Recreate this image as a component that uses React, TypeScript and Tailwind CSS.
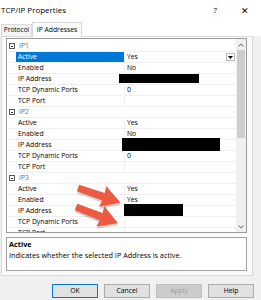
import React from "react";

type Row = [string, string];
const groups: { name: string; rows: Row[] }[] = [
  { name: "IP1", rows: [["Active", "Yes"], ["Enabled", "No"], ["IP Address", ""], ["TCP Dynamic Ports", "0"], ["TCP Port", ""]] },
  { name: "IP2", rows: [["Active", "Yes"], ["Enabled", "No"], ["IP Address", ""], ["TCP Dynamic Ports", "0"], ["TCP Port", ""]] },
  { name: "IP3", rows: [["Active", "Yes"], ["Enabled", "Yes"], ["IP Address", ""], ["TCP Dynamic Ports", ""], ["TCP Port", ""]] },
];

function Minus() {
  return (
    <div className="relative w-[6px] h-[6px] border border-[#5a5a5a] bg-white">
      <div className="absolute left-[1px] right-[1px] top-[1.5px] h-px bg-[#333]" />
    </div>
  );
}

function Arrow({ x, y, angle }: { x: number; y: number; angle: number }) {
  const pts = "0,-3.5 27,-4 26,-11 45,0 26,11 27,4 0,3.5";
  return (
    <g transform={`translate(${x} ${y}) rotate(${angle})`}>
      <polygon points={pts} fill="#000" opacity="0.18" transform="translate(1 2)" />
      <polygon points={pts} fill="#ec5a41" />
    </g>
  );
}

export default function App() {
  return (
    <div className="relative w-[261px] h-[300px] bg-[#f0f0f0] overflow-hidden flex flex-col font-['Open_Sans',sans-serif] text-black">
      {/* title bar */}
      <div className="h-[20px] bg-white flex items-center shrink-0">
        <span className="pl-[1px] text-[8px] leading-none">TCP/IP Properties</span>
        <span className="ml-auto text-[8px] leading-none mr-[24px]">?</span>
        <span className="text-[9px] leading-none mr-[12px]">✕</span>
      </div>
      {/* tabs */}
      <div className="h-[16px] bg-white flex items-end pl-[1px] shrink-0 relative z-10">
        <div className="h-[12px] w-[31px] border border-[#d9d9d9] border-b-0 bg-[#f3f3f3] flex items-center justify-center text-[6.5px] leading-none">Protocol</div>
        <div className="h-[15px] w-[50px] border border-[#d9d9d9] border-b-0 bg-[#fbfbfb] -mb-px flex items-center justify-center text-[6.8px] leading-none">IP Addresses</div>
      </div>
      {/* tab panel */}
      <div className="ml-[1px] w-[252px] h-[240px] border border-[#d9d9d9] bg-[#fbfbfb] pl-[4px] pt-[1px] flex flex-col gap-[4px] shrink-0">
        <div className="w-[241px] h-[195px] border border-[#9a9a9a] bg-white flex">
          <div className="w-[229px] overflow-hidden pt-[2px] text-[6.8px] leading-none">
            {groups.map((g, gi) => (
              <div key={g.name}>
                <div className="flex h-[11px] items-center border-b border-[#f0f0f0]">
                  <div className="w-[9px] flex items-center justify-center"><Minus /></div>
                  <span className="pl-[3px] text-[#6d6d6d]">{g.name}</span>
                </div>
                {g.rows.map(([n, v], ri) => {
                  const sel = gi === 0 && ri === 0;
                  return (
                    <div key={n} className="flex h-[11px] border-b border-[#f0f0f0]">
                      <div className="w-[9px] shrink-0" />
                      <div className={`w-[109px] shrink-0 pl-[2px] flex items-center border-r border-[#f0f0f0] ${sel ? "bg-[#0078d7] text-white" : ""}`}>{n}</div>
                      <div className="flex-1 pl-[2px] flex items-center relative">
                        {v}
                        {sel && (
                          <div className="absolute right-[1px] top-[1px] w-[9px] h-[8px] border border-[#b8b8b8] bg-white flex items-center justify-center">
                            <svg width="5" height="3" viewBox="0 0 5 3"><polygon points="0,0 5,0 2.5,3" fill="#000" /></svg>
                          </div>
                        )}
                      </div>
                    </div>
                  );
                })}
              </div>
            ))}
          </div>
          {/* scrollbar */}
          <div className="w-[10px] bg-[#f0f0f0] flex flex-col items-center">
            <div className="h-[11px] flex items-center justify-center">
              <svg width="6" height="4" viewBox="0 0 6 4"><polyline points="0.5,3.5 3,1 5.5,3.5" fill="none" stroke="#606060" strokeWidth="1" /></svg>
            </div>
            <div className="w-[8px] h-[88px] bg-[#cdcdcd]" />
            <div className="flex-1" />
            <div className="h-[11px] flex items-center justify-center">
              <svg width="6" height="4" viewBox="0 0 6 4"><polyline points="0.5,0.5 3,3 5.5,0.5" fill="none" stroke="#606060" strokeWidth="1" /></svg>
            </div>
          </div>
        </div>
        {/* description */}
        <div className="w-[241px] h-[34px] border border-[#a0a0a0] bg-white px-[2px] pt-[1px] text-[7.3px] leading-[11px]">
          <div className="font-bold">Active</div>
          <div>Indicates whether the selected IP Address is active.</div>
        </div>
      </div>
      {/* buttons */}
      <div className="flex pl-[52px] pt-[8px] gap-[6px] text-[6.8px] leading-none">
        <div className="w-[46px] h-[14px] border border-[#0078d7] bg-[#e1e1e1] flex items-center justify-center">OK</div>
        <div className="w-[46px] h-[14px] border border-[#adadad] bg-[#e1e1e1] flex items-center justify-center">Cancel</div>
        <div className="w-[46px] h-[14px] border border-[#bfbfbf] bg-[#cccccc] text-[#a0a0a0] flex items-center justify-center">Apply</div>
        <div className="w-[46px] h-[14px] border border-[#adadad] bg-[#e1e1e1] flex items-center justify-center">Help</div>
      </div>

      {/* redaction boxes */}
      <div className="absolute left-[119px] top-[74px] w-[80px] h-[9px] bg-black" />
      <div className="absolute left-[122px] top-[138px] w-[98px] h-[13px] bg-black" />
      <div className="absolute left-[124px] top-[204px] w-[59px] h-[12px] bg-black" />

      {/* red arrows */}
      <svg className="absolute left-0 top-0 pointer-events-none" width="261" height="300" viewBox="0 0 261 300">
        <Arrow x={78} y={188} angle={19} />
        <Arrow x={76} y={207} angle={21} />
      </svg>
    </div>
  );
}
